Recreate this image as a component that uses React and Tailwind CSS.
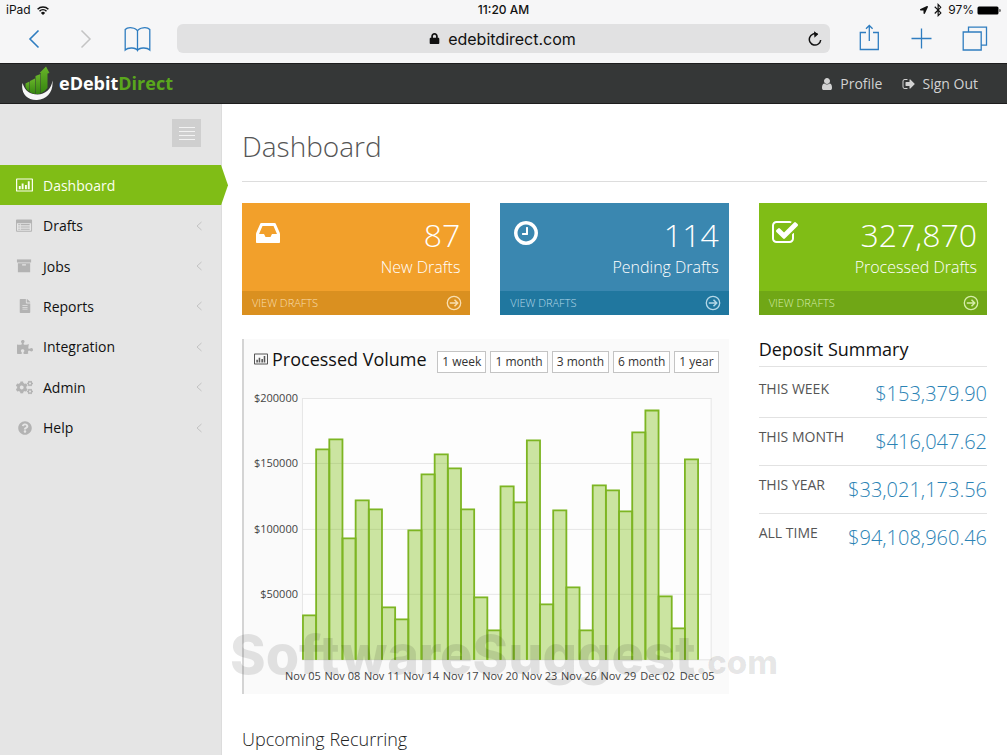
import React from "react";
import {
  FaLock,
  FaLocationArrow,
  FaBluetoothB,
  FaCogs,
  FaPuzzlePiece,
  FaFileAlt,
  FaQuestionCircle,
} from "react-icons/fa";

const PATHS = {
  check:
    "M1472 930v318q0 119-84.5 203.5t-203.5 84.5h-832q-119 0-203.5-84.5t-84.5-203.5v-832q0-119 84.5-203.5t203.5-84.5h832q63 0 117 25 15 7 18 23 3 17-9 29l-49 49q-10 10-23 10-3 0-9-2-23-6-45-6h-832q-66 0-113 47t-47 113v832q0 66 47 113t113 47h832q66 0 113-47t47-113v-254q0-13 9-22l64-64q10-10 23-10 6 0 12 3 20 8 20 29zm231-489l-814 814q-24 24-57 24t-57-24l-430-430q-24-24-24-57t24-57l110-110q24-24 57-24t57 24l263 263 647-647q24-24 57-24t57 24l110 110q24 24 24 57t-24 57z",
  inbox:
    "M1151 960h316q-1-3-2.5-8.5t-2.5-7.5l-212-496h-708l-212 496q-1 3-2.5 8.5t-2.5 7.5h316l95 192h320zm513 30v482q0 26-19 45t-45 19h-1408q-26 0-45-19t-19-45v-482q0-62 25-123l238-552q10-25 36.5-42t52.5-17h832q26 0 52.5 17t36.5 42l238 552q25 61 25 123z",
  clock:
    "M1024 544v448q0 14-9 23t-23 9h-320q-14 0-23-9t-9-23v-64q0-14 9-23t23-9h224v-352q0-14 9-23t23-9h64q14 0 23 9t9 23zm416 352q0-148-73-273t-198-198-273-73-273 73-198 198-73 273 73 273 198 198 273 73 273-73 198-198 73-273zm224 0q0 209-103 385.5t-279.5 279.5-385.5 103-385.5-103-279.5-279.5-103-385.5 103-385.5 279.5-279.5 385.5-103 385.5 103 279.5 279.5 103 385.5z",
  user:
    "M1536 1399q0 109-62.5 187t-150.5 78h-854q-88 0-150.5-78t-62.5-187q0-85 8.5-160.5t31.5-152 58.5-131 94-89 134.5-34.5q131 128 313 128t313-128q76 0 134.5 34.5t94 89 58.5 131 31.5 152 8.5 160.5zm-256-887q0 159-112.5 271.5t-271.5 112.5-271.5-112.5-112.5-271.5 112.5-271.5 271.5-112.5 271.5 112.5 112.5 271.5z",
  signOut:
    "M704 1440q0 4 1 20t.5 26.5-3 23.5-10 19.5-20.5 6.5h-320q-119 0-203.5-84.5t-84.5-203.5v-704q0-119 84.5-203.5t203.5-84.5h320q13 0 22.5 9.5t9.5 22.5q0 4 1 20t.5 26.5-3 23.5-10 19.5-20.5 6.5h-320q-66 0-113 47t-47 113v704q0 66 47 113t113 47h312l11.5 1 11.5 3 8 5.5 7 9 2 13.5zm928-544q0 26-19 45l-544 544q-19 19-45 19t-45-19-19-45v-288h-448q-26 0-45-19t-19-45v-384q0-26 19-45t45-19h448v-288q0-26 19-45t45-19 45 19l544 544q19 19 19 45z",
};

function Glyph({ name, className }) {
  return (
    <svg viewBox="0 0 1792 1792" fill="currentColor" className={className} aria-hidden="true">
      <path d={PATHS[name]} />
    </svg>
  );
}

function BarsIcon({ className }) {
  return (
    <svg viewBox="0 0 18 14" className={className} fill="currentColor" aria-hidden="true">
      <path fillRule="evenodd" d="M1 0h16a1 1 0 0 1 1 1v12a1 1 0 0 1-1 1H1a1 1 0 0 1-1-1V1a1 1 0 0 1 1-1zM1.300 1.300v11.400h15.400V1.300z" />
      <path d="M3 8h2v3.500H3zM6 5.500h2v6H6zM9.500 7h2v4.500h-2zM12.500 3h2v8.500h-2z" />
    </svg>
  );
}

function ListIcon({ className }) {
  return (
    <svg viewBox="0 0 18 14" className={className} fill="currentColor" aria-hidden="true">
      <path fillRule="evenodd" d="M1 0h15a1 1 0 0 1 1 1v11a1 1 0 0 1-1 1H1a1 1 0 0 1-1-1V1a1 1 0 0 1 1-1zM1 4v8h15V4z" />
      <path d="M2.500 5h1.500v1.200H2.500zM5 5h9.500v1.200H5zM2.500 7.400h1.500v1.200H2.500zM5 7.400h9.500v1.200H5zM2.500 9.800h1.500V11H2.500zM5 9.800h9.500V11H5z" />
    </svg>
  );
}

function ArchiveIcon({ className }) {
  return (
    <svg viewBox="0 0 18 14" className={className} fill="currentColor" aria-hidden="true">
      <path d="M1 0h15v3.300H1z" />
      <path fillRule="evenodd" d="M2 4h13v9.500H2zM6.500 5.200v1.300h4V5.200z" />
    </svg>
  );
}

function ArrowCircle() {
  return (
    <svg viewBox="0 0 16 16" className="size-4" fill="none" stroke="currentColor" strokeWidth="1.300" aria-hidden="true">
      <circle cx="8" cy="8" r="6.700" />
      <path d="M3.800 8h7.600M8.500 4.800 11.700 8l-3.200 3.200" strokeWidth="1.500" />
    </svg>
  );
}

function StatusBar() {
  return (
    <div className="grid h-5 grid-cols-3 items-center px-1.5 text-[12px] leading-5 text-[#111]">
      <div className="flex items-center gap-1.5">
        <span>iPad</span>
        <svg viewBox="0 0 12 9" className="h-[9px] w-3" fill="none" stroke="#111" strokeWidth="1.500" aria-hidden="true">
          <path d="M.6 3.200a7.600 7.600 0 0 1 10.800 0M2.500 5.200a5 5 0 0 1 7 0" />
          <path d="M6 9 3.900 6.900a3 3 0 0 1 4.200 0z" fill="#111" stroke="none" />
        </svg>
      </div>
      <div className="text-center font-medium">11:20 AM</div>
      <div className="flex items-center justify-end gap-[3px]">
        <FaLocationArrow className="size-2" />
        <FaBluetoothB className="size-3.5" />
        <span>97%</span>
        <svg viewBox="0 0 24 9" className="h-[9px] w-6" aria-hidden="true">
          <rect x=".5" y=".5" width="21" height="8" rx="1.500" fill="#000" />
          <path d="M22.500 3v3l1-.6V3.600z" fill="#000" />
        </svg>
      </div>
    </div>
  );
}

function BrowserBar() {
  return (
    <div className="flex h-[43px] items-start pr-[19px] pl-[26px] text-[#2f7dc0]">
      <button aria-label="Back" className="mt-2 flex w-4 justify-center">
        <svg viewBox="0 0 12 22" className="h-[22px] w-3" fill="none" stroke="currentColor" strokeWidth="1.600"><path d="M10.500 2.500 2 11l8.500 8.500" /></svg>
      </button>
      <button aria-label="Forward" className="mt-2 ml-9 flex w-4 justify-center text-[#c4c4c4]">
        <svg viewBox="0 0 12 22" className="h-[22px] w-3" fill="none" stroke="currentColor" strokeWidth="1.500"><path d="M1.500 2.500 10 11l-8.500 8.500" /></svg>
      </button>
      <button aria-label="Bookmarks" className="mt-1.5 ml-[30px]">
        <svg viewBox="0 0 27 26" className="h-[26px] w-[27px]" fill="none" stroke="currentColor" strokeWidth="1.300">
          <path d="M13.500 5C12 1.500 4 .5 1.200 3.500V24c3-3 10.800-2.500 12.300.5C15 21.500 22.800 21 25.800 24V3.500C23 .5 15 1.500 13.500 5zM13.500 5v19.500" />
        </svg>
      </button>
      <div className="mt-1 ml-[26px] flex h-[29px] flex-1 items-center rounded-md bg-[#e1e1e2] px-2 text-[#111]">
        <div className="flex flex-1 items-center justify-center gap-2 pl-3 text-[16px]">
          <FaLock className="size-[11px]" />
          <span>edebitdirect.com</span>
        </div>
        <button aria-label="Reload">
          <svg viewBox="0 0 14 16" className="h-4 w-3.5" fill="none" stroke="#111" strokeWidth="1.500">
            <path d="M9.500 3.200A5.700 5.700 0 1 0 12.700 9" />
            <path d="M6 .3 10.200 3.300 6.400 6.700z" fill="#111" stroke="none" />
          </svg>
        </button>
      </div>
      <button aria-label="Share" className="mt-1 ml-[29px]">
        <svg viewBox="0 0 21 27" className="h-[27px] w-[21px]" fill="none" stroke="currentColor" strokeWidth="1.300">
          <path d="M7 8.500H1.300v17h18v-17H14M10.300 17V1.500M7 4.800l3.300-3.300 3.300 3.300" />
        </svg>
      </button>
      <button aria-label="New tab" className="mt-2 ml-[31px]">
        <svg viewBox="0 0 21 21" className="size-[21px]" fill="none" stroke="currentColor" strokeWidth="1.300"><path d="M10.500 .5v20M.5 10.500h20" /></svg>
      </button>
      <button aria-label="Tabs" className="mt-1.5 ml-[30px]">
        <svg viewBox="0 0 26 25" className="h-[25px] w-[26px]" fill="none" stroke="currentColor" strokeWidth="1.300">
          <path d="M1.200 6h18v18h-18zM6.500 6V1.200h18v18h-5.300" />
        </svg>
      </button>
    </div>
  );
}

function Logo() {
  return (
    <a href="#home" className="flex items-center gap-1.5 text-[18px] font-bold">
      <svg viewBox="0 0 32 36" className="h-9 w-8" aria-hidden="true">
        <defs>
          <linearGradient id="leaf" x1="0" y1="0" x2="0" y2="1">
            <stop offset="0" stopColor="#69b52a" />
            <stop offset="1" stopColor="#35850f" />
          </linearGradient>
        </defs>
        <path d="M1.500 17C-.5 27 6 34.500 16 34c10-.5 16.500-8 15.500-19.500C30.500 23 24 28.500 16.500 28.500S4 25 1.500 17z" fill="#f7f7f7" />
        <path d="M4.500 17.500l4-2V26q-3-2-4-5z" fill="url(#leaf)" />
        <path d="M9 15l5-2.500V28q-3-.5-5-1.800z" fill="url(#leaf)" />
        <path d="M14.500 10l5-2v19.500q-2 .7-5 .6z" fill="url(#leaf)" />
        <path d="M20 7.500l-1.500-.5L25 .5 28.500 7l-2 .5V22q-2.500 3.500-6.500 5.200z" fill="url(#leaf)" />
      </svg>
      <span className="text-white">eDebit<span className="text-[#5aa71c]">Direct</span></span>
    </a>
  );
}

const MENU = [
  { label: "Drafts", icon: <ListIcon className="h-3.5 w-[18px]" /> },
  { label: "Jobs", icon: <ArchiveIcon className="h-3.5 w-[18px]" /> },
  { label: "Reports", icon: <FaFileAlt className="size-3.5" /> },
  { label: "Integration", icon: <FaPuzzlePiece className="size-4" /> },
  { label: "Admin", icon: <FaCogs className="size-[17px]" /> },
  { label: "Help", icon: <FaQuestionCircle className="size-3.5" /> },
];

function Sidebar() {
  return (
    <nav className="w-[222px] shrink-0 border-r border-[#dcdcdc] bg-[#e5e5e5] text-[14px] text-[#111]">
      <div className="flex justify-end pt-[15px] pr-5 pb-[18px]">
        <button aria-label="Toggle menu" className="flex h-7 w-[29px] flex-col items-center justify-center gap-[3px] bg-[#cfcfcf]">
          <span className="h-px w-4 bg-[#f3f3f3]" />
          <span className="h-px w-4 bg-[#f3f3f3]" />
          <span className="h-px w-4 bg-[#f3f3f3]" />
          <span className="h-px w-4 bg-[#f3f3f3]" />
        </button>
      </div>
      <ul className="grid h-[283px] auto-rows-fr">
        <li className="relative">
          <a href="#dashboard" className="flex h-full items-center bg-[#80bd16] pl-4 text-[#fbfff0]">
            <span className="flex w-[27px]"><BarsIcon className="h-3.5 w-[17px]" /></span>Dashboard
          </a>
          <svg viewBox="0 0 7 40" preserveAspectRatio="none" className="absolute top-0 left-full h-full w-[7px]" aria-hidden="true">
            <path d="M0 0 7 20 0 40z" fill="#80bd16" />
          </svg>
        </li>
        {MENU.map((m) => (
          <li key={m.label}>
            <a href={"#" + m.label.toLowerCase()} className="flex h-full items-center pr-[19px] pl-4">
              <span className="flex w-[27px] text-[#b3b3b3]"><span className="flex w-[17px] justify-center">{m.icon}</span></span>
              <span className="flex-1">{m.label}</span>
              <svg viewBox="0 0 6 10" className="h-2.5 w-1.5" fill="none" stroke="#c2c2c2" aria-hidden="true"><path d="M5.500 1 1 5l4.500 4" /></svg>
            </a>
          </li>
        ))}
      </ul>
    </nav>
  );
}

function StatCard({ icon, value, label, tone, footTone, linkTone }) {
  return (
    <section className={"text-white " + tone}>
      <div className="flex h-[88px] justify-between pt-[14px] pr-2.5 pl-3">
        <Glyph name={icon} className="mt-0.5 size-[28px]" />
        <div className="text-right font-light">
          <div className="text-[32px] leading-9">{value}</div>
          <div className="text-[16px] leading-7">{label}</div>
        </div>
      </div>
      <a href="#drafts" className={"flex h-6 items-center justify-between pr-2 pl-2.5 text-[11px] font-light " + footTone + " " + linkTone}>
        VIEW DRAFTS
        <ArrowCircle />
      </a>
    </section>
  );
}

const BAR_TOPS = [
  615, 449, 439, 538, 500, 509, 607, 619, 530, 474, 454, 468, 509, 597, 630, 486, 502, 440, 604, 510, 587, 630, 485, 490,
  511, 432, 410, 596, 628, 459,
].map((y) => y - 389);
const DATES = ["Nov 05", "Nov 08", "Nov 11", "Nov 14", "Nov 17", "Nov 20", "Nov 23", "Nov 26", "Nov 29", "Dec 02", "Dec 05"];
const STEP = 13.18;
const LEFT = 58.5;
const BASE = 271;

function VolumeChart() {
  return (
    <svg viewBox="0 0 485 305" className="block h-auto w-full" role="img" aria-label="Processed volume by day">
      <rect x={LEFT} y="9.500" width="409" height="261.500" fill="#fdfdfd" stroke="#e6e6e6" />
      {["$200000", "$150000", "$100000", "$50000"].map((t, i) => (
        <g key={t}>
          <path d={`M${LEFT} ${Math.round(9 + i * 65.4) + 0.5}h409`} stroke="#e6e6e6" />
          <text x="54" y={Math.round(13 + i * 65.4)} textAnchor="end" fontSize="11" fill="#444">{t}</text>
        </g>
      ))}
      {BAR_TOPS.map((y, i) => {
        const x = LEFT + 0.5 + i * STEP;
        return (
          <g key={i}>
            <rect x={x} y={y} width={STEP} height={BASE - y} fill="#80bd16" fillOpacity=".4" />
            <path d={`M${x} ${BASE}V${y + 0.5}h${STEP}V${BASE}`} fill="none" stroke="#7db523" strokeWidth="1.800" />
          </g>
        );
      })}
      {DATES.map((t, i) => (
        <text key={t} x={59 + i * 39.45} y="291" textAnchor="middle" fontSize="11" fill="#444">{t}</text>
      ))}
    </svg>
  );
}

const DEPOSITS = [
  ["THIS WEEK", "$153,379.90"],
  ["THIS MONTH", "$416,047.62"],
  ["THIS YEAR", "$33,021,173.56"],
  ["ALL TIME", "$94,108,960.46"],
];

export default function App() {
  return (
    <div className="flex min-h-screen flex-col bg-white font-['Open_Sans',sans-serif] text-[#222]">
      <div className="bg-[#f6f6f7] font-['Inter',sans-serif]">
        <StatusBar />
        <BrowserBar />
      </div>
      <header className="flex h-[41px] items-center justify-between border-y border-[#1d1d1d] bg-[#353737] pr-[29px] pl-[21px]">
        <Logo />
        <div className="flex gap-5 text-[14px] text-[#d2d2d2]">
          <a href="#profile" className="flex items-center gap-1.5"><Glyph name="user" className="size-3.5" />Profile</a>
          <a href="#signout" className="flex items-center gap-1.5"><Glyph name="signOut" className="size-3.5" />Sign Out</a>
        </div>
      </header>
      <div className="flex flex-1">
        <Sidebar />
        <main className="min-w-0 flex-1 px-5">
          <h1 className="border-b border-[#ddd] pt-[22px] pb-[15px] text-[28px] leading-10 font-light text-[#555]">Dashboard</h1>
          <div className="mt-[21px] grid grid-cols-3 gap-x-[30px] gap-y-6">
            <StatCard icon="inbox" value="87" label="New Drafts" tone="bg-[#f2a02b]" footTone="bg-[#da9020]" linkTone="text-[#f9dfb0]" />
            <StatCard icon="clock" value="114" label="Pending Drafts" tone="bg-[#3a87b0]" footTone="bg-[#20779f]" linkTone="text-[#b5d8e8]" />
            <StatCard icon="check" value="327,870" label="Processed Drafts" tone="bg-[#80bd16]" footTone="bg-[#70a716]" linkTone="text-[#d6edaa]" />

            <section className="relative col-span-2 border-l-2 border-[#d4d4d4] bg-[#fafafa]">
              <div className="flex h-[50px] items-start justify-between pr-2.5 pl-2.5">
                <h2 className="flex items-center gap-1 pt-1.5 text-[18px] leading-7 text-[#111]">
                  <BarsIcon className="h-3 w-3.5 text-[#555]" />
                  Processed Volume
                </h2>
                <div className="flex gap-1 pt-3 text-[12px] text-[#333]">
                  {["1 week", "1 month", "3 month", "6 month", "1 year"].map((t) => (
                    <button key={t} className="h-[22px] border border-[#c4c4c4] bg-white px-1 leading-5">{t}</button>
                  ))}
                </div>
              </div>
              <VolumeChart />
              <div className="pointer-events-none absolute bottom-3 -left-3.5 font-['Inter',sans-serif] text-[54px] leading-none font-extrabold whitespace-nowrap text-black/10">
                SoftwareSuggest<span className="text-[33px]">.com</span>
              </div>
            </section>

            <section>
              <h2 className="border-b border-[#e2e2e2] pb-[7px] text-[18px] leading-5 text-[#111]">Deposit Summary</h2>
              <dl className="pt-[3px]">
                {DEPOSITS.map(([k, v]) => (
                  <div key={k} className="flex h-12 justify-between border-b border-[#e2e2e2] pt-[9px] last:border-b-0">
                    <dt className="text-[14px] leading-5 text-[#555]">{k}</dt>
                    <dd className="text-[20px] leading-[30px] font-light text-[#2b83b5]">{v}</dd>
                  </div>
                ))}
              </dl>
            </section>
          </div>
          <h2 className="mt-[34px] text-[18px] leading-[22px] font-light text-[#222]">Upcoming Recurring</h2>
        </main>
      </div>
    </div>
  );
}
